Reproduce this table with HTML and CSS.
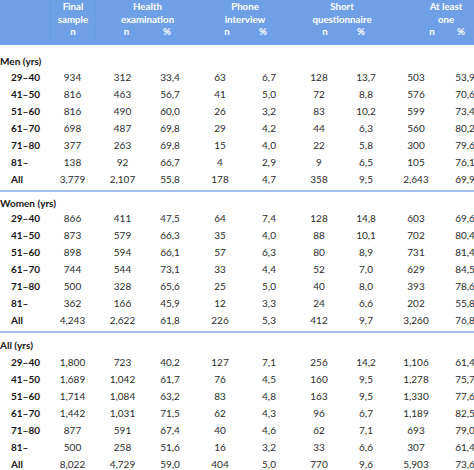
FILE: index.html
```html
<!DOCTYPE html>
<html>
<head>
<meta charset="utf-8">
<link rel="stylesheet" href="styles.css">
</head>
<body>
<div class="tbl">
  <div class="head">
    <div class="hg g-final">Final<br>sample</div>
    <div class="hg g-health">Health<br>examination</div>
    <div class="hg g-phone">Phone<br>interview</div>
    <div class="hg g-short">Short<br>questionnaire</div>
    <div class="hg g-atleast">At least<br>one</div>
    <div class="hs s-final">n</div>
    <div class="hs s-hn">n</div>
    <div class="hs s-hp">%</div>
    <div class="hs s-pn">n</div>
    <div class="hs s-pp">%</div>
    <div class="hs s-sn">n</div>
    <div class="hs s-sp">%</div>
    <div class="hs s-an">n</div>
    <div class="hs s-ap">%</div>
  </div>

  <div class="grp grp-men">
    <div class="glabel">Men (yrs)</div>
    <div class="row"><span class="lab">29–40</span><span>934</span><span>312</span><span>33,4</span><span>63</span><span>6,7</span><span>128</span><span>13,7</span><span>503</span><span>53,9</span></div>
    <div class="row"><span class="lab">41–50</span><span>816</span><span>463</span><span>56,7</span><span>41</span><span>5,0</span><span>72</span><span>8,8</span><span>576</span><span>70,6</span></div>
    <div class="row"><span class="lab">51–60</span><span>816</span><span>490</span><span>60,0</span><span>26</span><span>3,2</span><span>83</span><span>10,2</span><span>599</span><span>73,4</span></div>
    <div class="row"><span class="lab">61–70</span><span>698</span><span>487</span><span>69,8</span><span>29</span><span>4,2</span><span>44</span><span>6,3</span><span>560</span><span>80,2</span></div>
    <div class="row"><span class="lab">71–80</span><span>377</span><span>263</span><span>69,8</span><span>15</span><span>4,0</span><span>22</span><span>5,8</span><span>300</span><span>79,6</span></div>
    <div class="row"><span class="lab">81–</span><span>138</span><span>92</span><span>66,7</span><span>4</span><span>2,9</span><span>9</span><span>6,5</span><span>105</span><span>76,1</span></div>
    <div class="row"><span class="lab">All</span><span>3,779</span><span>2,107</span><span>55,8</span><span>178</span><span>4,7</span><span>358</span><span>9,5</span><span>2,643</span><span>69,9</span></div>
  </div>

  <div class="grp grp-women">
    <div class="glabel">Women (yrs)</div>
    <div class="row"><span class="lab">29–40</span><span>866</span><span>411</span><span>47,5</span><span>64</span><span>7,4</span><span>128</span><span>14,8</span><span>603</span><span>69,6</span></div>
    <div class="row"><span class="lab">41–50</span><span>873</span><span>579</span><span>66,3</span><span>35</span><span>4,0</span><span>88</span><span>10,1</span><span>702</span><span>80,4</span></div>
    <div class="row"><span class="lab">51–60</span><span>898</span><span>594</span><span>66,1</span><span>57</span><span>6,3</span><span>80</span><span>8,9</span><span>731</span><span>81,4</span></div>
    <div class="row"><span class="lab">61–70</span><span>744</span><span>544</span><span>73,1</span><span>33</span><span>4,4</span><span>52</span><span>7,0</span><span>629</span><span>84,5</span></div>
    <div class="row"><span class="lab">71–80</span><span>500</span><span>328</span><span>65,6</span><span>25</span><span>5,0</span><span>40</span><span>8,0</span><span>393</span><span>78,6</span></div>
    <div class="row"><span class="lab">81–</span><span>362</span><span>166</span><span>45,9</span><span>12</span><span>3,3</span><span>24</span><span>6,6</span><span>202</span><span>55,8</span></div>
    <div class="row"><span class="lab">All</span><span>4,243</span><span>2,622</span><span>61,8</span><span>226</span><span>5,3</span><span>412</span><span>9,7</span><span>3,260</span><span>76,8</span></div>
  </div>

  <div class="grp grp-all">
    <div class="glabel">All (yrs)</div>
    <div class="row"><span class="lab">29–40</span><span>1,800</span><span>723</span><span>40,2</span><span>127</span><span>7,1</span><span>256</span><span>14,2</span><span>1,106</span><span>61,4</span></div>
    <div class="row"><span class="lab">41–50</span><span>1,689</span><span>1,042</span><span>61,7</span><span>76</span><span>4,5</span><span>160</span><span>9,5</span><span>1,278</span><span>75,7</span></div>
    <div class="row"><span class="lab">51–60</span><span>1,714</span><span>1,084</span><span>63,2</span><span>83</span><span>4,8</span><span>163</span><span>9,5</span><span>1,330</span><span>77,6</span></div>
    <div class="row"><span class="lab">61–70</span><span>1,442</span><span>1,031</span><span>71,5</span><span>62</span><span>4,3</span><span>96</span><span>6,7</span><span>1,189</span><span>82,5</span></div>
    <div class="row"><span class="lab">71–80</span><span>877</span><span>591</span><span>67,4</span><span>40</span><span>4,6</span><span>62</span><span>7,1</span><span>693</span><span>79,0</span></div>
    <div class="row"><span class="lab">81–</span><span>500</span><span>258</span><span>51,6</span><span>16</span><span>3,2</span><span>33</span><span>6,6</span><span>307</span><span>61,4</span></div>
    <div class="row"><span class="lab">All</span><span>8,022</span><span>4,729</span><span>59,0</span><span>404</span><span>5,0</span><span>770</span><span>9,6</span><span>5,903</span><span>73,6</span></div>
  </div>
</div>
</body>
</html>
```

FILE: styles.css
```css
html, body {
  margin: 0;
  padding: 0;
  background: #ffffff;
}
body {
  width: 474px;
  height: 470px;
  overflow: hidden;
  font-family: Lato, "Open Sans", "DejaVu Sans", sans-serif;
}
.tbl {
  width: 480px;
}
.head {
  display: grid;
  grid-template-columns: 50px 45px 55px 40px 60px 38px 62px 32px 68px 30px;
  grid-template-rows: 12.5px 12.5px 20px;
  background: #6fa0e7;
  color: #ffffff;
  font-weight: 700;
  font-size: 9.7px;
  line-height: 12.5px;
  text-align: center;
}
.hg {
  grid-row: 1 / span 2;
  white-space: nowrap;
}
.hs {
  grid-row: 3;
}
.g-final { grid-column: 2; border-left: 1px solid #679ae2; }
.g-health { grid-column: 3 / span 2; padding-left: 9px; border-left: 1px solid #6a9ce4; }
.g-phone { grid-column: 5 / span 2; padding-left: 12px; }
.g-short { grid-column: 7 / span 2; padding-left: 14px; }
.g-atleast { grid-column: 9 / span 2; padding-left: 30px; }
.s-final { grid-column: 2; border-left: 1px solid #679ae2; }
.s-hn { grid-column: 3; padding-left: 7px; border-left: 1px solid #6a9ce4; }
.s-hp { grid-column: 4; padding-right: 6px; }
.s-pn { grid-column: 5; padding-left: 14px; }
.s-pp { grid-column: 6; padding-right: 12px; }
.s-sn { grid-column: 7; padding-left: 12px; }
.s-sp { grid-column: 8; padding-right: 10px; }
.s-an { grid-column: 9; padding-left: 32px; }
.s-ap { grid-column: 10; padding-right: 8px; }

.grp {
  padding-bottom: 2px;
  border-bottom: 2px solid #a3c0ea;
}
.grp-men { padding-top: 8px; }
.grp-women { padding-top: 4px; }
.grp-all { padding-top: 4px; border-bottom: none; }

.glabel {
  height: 16px;
  line-height: 16px;
  font-size: 10px;
  font-weight: 700;
  color: #161616;
  white-space: nowrap;
}
.grp-women .glabel { height: 14px; line-height: 14px; }
.grp-all .glabel { height: 16.5px; line-height: 16.5px; }

.row {
  display: grid;
  grid-template-columns: 50px 45px 55px 40px 60px 38px 62px 32px 68px 30px;
  height: 17px;
  align-items: center;
  font-size: 10px;
  line-height: 17px;
  color: #2b2b2b;
  text-align: center;
}
.row .lab {
  text-align: left;
  padding-left: 11px;
  font-weight: 700;
  color: #161616;
}
```
